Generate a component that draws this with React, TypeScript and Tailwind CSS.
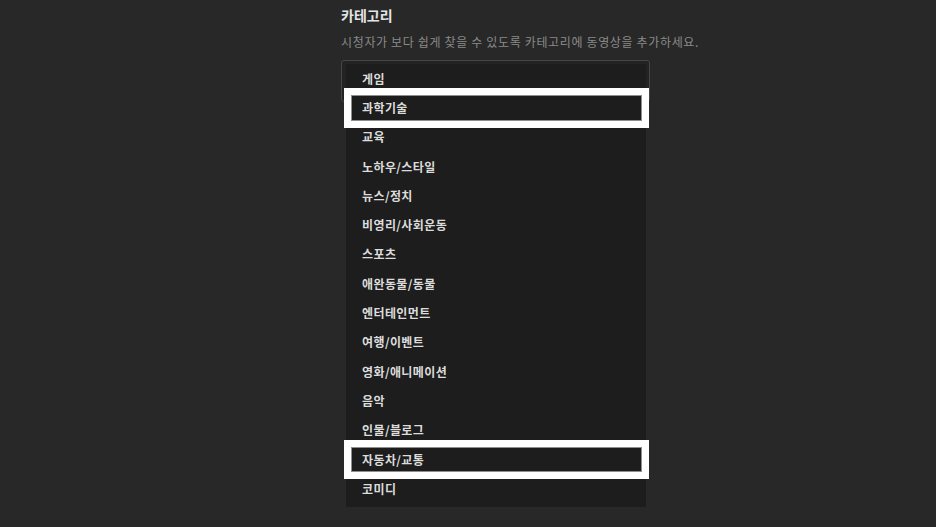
import React from 'react';

const CATEGORIES = [
  '게임',
  '과학기술',
  '교육',
  '노하우/스타일',
  '뉴스/정치',
  '비영리/사회운동',
  '스포츠',
  '애완동물/동물',
  '엔터테인먼트',
  '여행/이벤트',
  '영화/애니메이션',
  '음악',
  '인물/블로그',
  '자동차/교통',
  '코미디',
];

// 강조 표시된 항목
const MARKED = new Set(['과학기술', '자동차/교통']);

export default function App() {
  return (
    <div className="min-h-[527px] w-full overflow-hidden bg-[#282828] font-['Noto_Sans_CJK_KR','Noto_Sans',sans-serif]">
      <div className="pl-[341px] pt-[5px]">
        <h2 className="text-[14px] font-bold leading-[20px] text-[#e4e4e4]">카테고리</h2>
        <p className="mt-[8px] text-[12px] leading-[18px] tracking-[0.65px] text-[#8a8a8a]">
          시청자가 보다 쉽게 찾을 수 있도록 카테고리에 동영상을 추가하세요.
        </p>

        {/* 선택 상자 + 펼쳐진 목록 */}
        <div className="relative mt-[9px] h-[42px] w-[309px] rounded-[3px] border border-[#464646] bg-[#232323]">
          <ul className="absolute left-[4px] top-[3px] z-10 w-[300px] bg-[#1d1d1d] pb-[4px]">
            {CATEGORIES.map((c) => (
              <li
                key={c}
                className="relative flex h-[29.3px] items-center px-[16px] text-[12px] font-bold tracking-[0.4px] text-[#dcdcdc]"
              >
                {c}
                {MARKED.has(c) && (
                  <span className="pointer-events-none absolute -bottom-[5px] -left-[2px] -right-[3px] -top-[5px] border-[7px] border-white shadow-[inset_0_0_0_1px_#8f8f8f]" />
                )}
              </li>
            ))}
          </ul>
        </div>
      </div>
    </div>
  );
}
